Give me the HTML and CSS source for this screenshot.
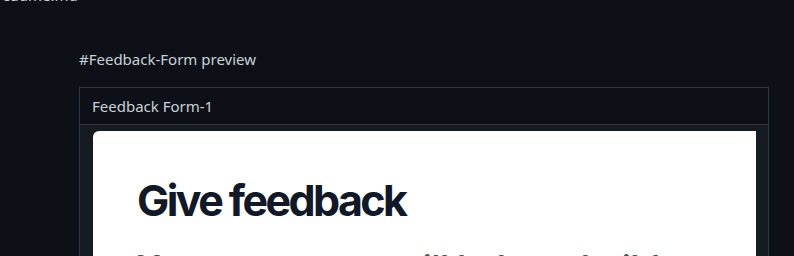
FILE: index.html
```html
<!DOCTYPE html>
<html lang="en">
<head>
    <meta charset="UTF-8">
    <meta name="viewport" content="width=device-width, initial-scale=1.0">
    <title>Feedback Form preview</title>
    <link rel="stylesheet" href="styles.css">
</head>
<body>
    <div class="file-name">readme.md</div>

    <div class="preview">
        <h2 class="preview-title">#Feedback-Form preview</h2>

        <div class="frame">
            <div class="frame-header">Feedback Form-1</div>
            <div class="frame-body">
                <div class="sheet">
                    <h1>Give feedback</h1>
                    <p class="lead">Your comments will help us build a better product</p>
                </div>
            </div>
        </div>
    </div>
</body>
</html>
```

FILE: styles.css
```css
body {
    margin: 0;
    background: #0d1117;
    color: #c9d1d9;
    font-family: 'Noto Sans', 'Segoe UI', sans-serif;
    height: 256px;
    overflow: hidden;
}
.file-name {
    margin: -15px 0 0 -4px;
    font-size: 15px;
    line-height: 20px;
}
.preview {
    padding: 44px 25px 0 79px;
}
.preview-title {
    margin: 0 0 18px 0;
    font-size: 15px;
    font-weight: normal;
    line-height: 20px;
}
.frame {
    border: 1px solid #30363d;
    border-bottom: none;
}
.frame-header {
    padding: 8px 12px;
    font-size: 15px;
    line-height: 20px;
    border-bottom: 1px solid #30363d;
}
.frame-body {
    background: #161b22;
    padding: 6px 12px 0 13px;
}
.sheet {
    background: #ffffff;
    border-top-left-radius: 6px;
    padding: 44px 44px 0 44px;
    height: 200px;
    font-family: Inter, sans-serif;
}
.sheet h1 {
    margin: 0;
    color: #111827;
    font-size: 43px;
    font-weight: 700;
    letter-spacing: -0.06em;
    line-height: 1.2;
}
.lead {
    margin: 19px 0 0 0;
    color: #4b5563;
    font-size: 33px;
    font-weight: 600;
    line-height: 1.3;
}
```
